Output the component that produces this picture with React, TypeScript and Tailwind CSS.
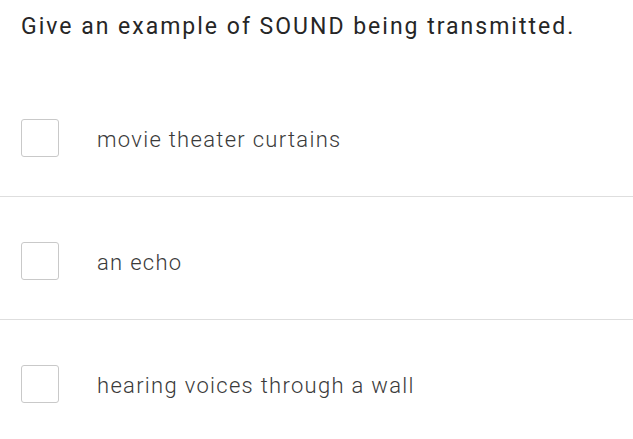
const options = ["movie theater curtains", "an echo", "hearing voices through a wall"];

export default function App() {
  return (
    <div className="min-h-screen bg-white text-[#333]" style={{ fontFamily: "Roboto, 'Liberation Sans', sans-serif" }}>
      <h1 className="px-[21px] pt-[11px] text-[23px] leading-[32px] font-normal tracking-[2px] text-[#262626] whitespace-nowrap">
        Give an example of SOUND being transmitted.
      </h1>
      <div className="mt-[31px]">
        {options.map((opt, i) => (
          <label
            key={opt}
            className={`flex items-center pl-[21px] pt-[45px] pb-[39px] ${
              i < options.length - 1 ? "border-b border-[#dedede]" : ""
            }`}
          >
            <span className="w-[38px] h-[38px] shrink-0 rounded-[3px] border border-[#c9c9c9] bg-white" />
            <span className="ml-[38px] text-[22px] leading-[28px] font-light tracking-[1.3px] text-[#3a3a3a] pt-[4px] whitespace-nowrap">
              {opt}
            </span>
          </label>
        ))}
      </div>
    </div>
  );
}
